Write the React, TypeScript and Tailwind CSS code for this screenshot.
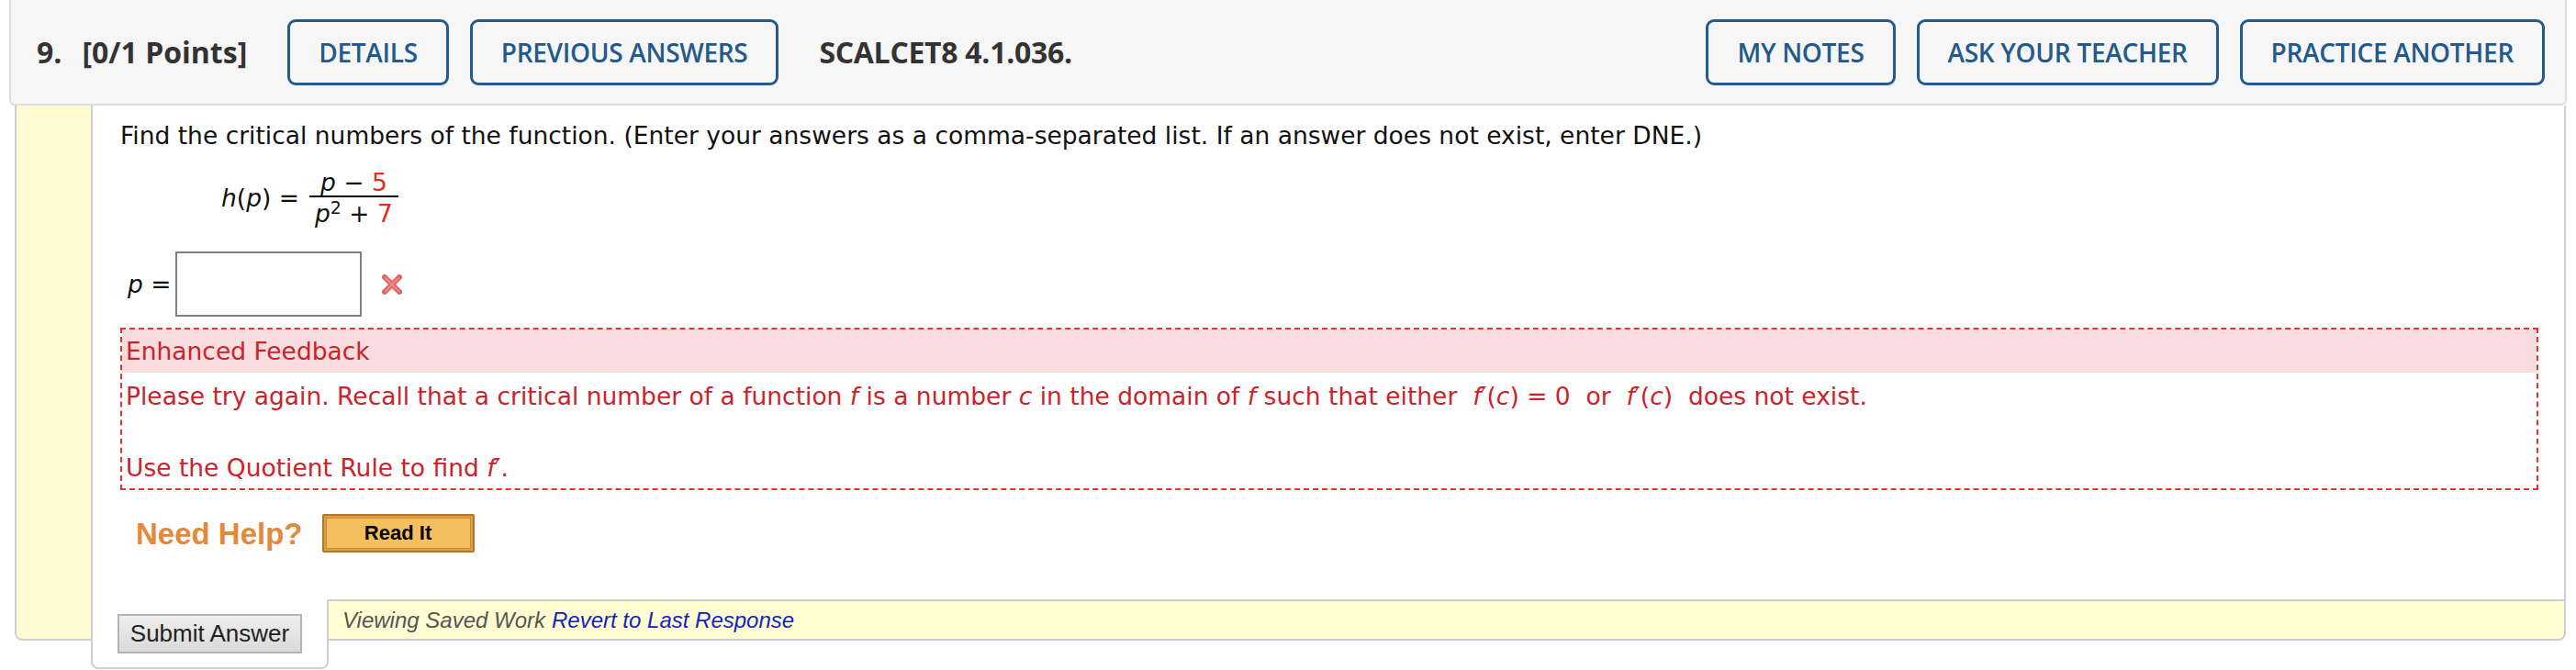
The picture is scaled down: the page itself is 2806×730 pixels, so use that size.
import React from "react";

const headerFont = { fontFamily: '"Open Sans", "Liberation Sans", sans-serif' };

function HeaderButton({ label }: { label: string }) {
  return (
    <button
      type="button"
      className="h-[72px] rounded-[9px] border-[3px] border-[#245b8c] bg-transparent px-[31px] text-[28px] font-semibold tracking-[-0.3px] text-[#235a8b]"
    >
      {label}
    </button>
  );
}

function Fraction() {
  return (
    <span className="inline-flex flex-col items-stretch">
      <span className="h-[28px] px-[6px] text-center leading-[28px]">
        <i>p</i> − <span className="text-[#ea2a20]">5</span>
      </span>
      <span className="h-[2px] bg-black" />
      <span className="h-[32px] px-[6px] pt-[4px] text-center leading-[28px]">
        <i>p</i>
        <sup className="text-[19px] leading-none">2</sup> + <span className="text-[#ea2a20]">7</span>
      </span>
    </span>
  );
}

function WrongMark() {
  return (
    <svg width="26" height="26" viewBox="0 0 26 26" className="ml-[20px]">
      <g stroke="#e15b5b" strokeWidth="6" strokeLinecap="round" opacity="0.95">
        <line x1="5" y1="5" x2="21" y2="21" />
        <line x1="21" y1="5" x2="5" y2="21" />
      </g>
      <g stroke="#f08a8a" strokeWidth="2" strokeLinecap="round">
        <line x1="6" y1="6" x2="20" y2="20" />
        <line x1="20" y1="6" x2="6" y2="20" />
      </g>
    </svg>
  );
}

export default function App() {
  return (
    <div className="h-[730px] w-[2806px] overflow-hidden bg-white">
      {/* question header */}
      <header
        className="mx-[10px] flex h-[115px] items-center rounded-b-[6px] border-2 border-t-0 border-[#dddddd] bg-[#f6f6f6] pl-[28px] pr-[22px]"
        style={headerFont}
      >
        <span className="text-[32px] font-bold text-[#333333]">9.</span>
        <span className="ml-[22px] text-[32px] font-bold text-[#333333]">[0/1 Points]</span>
        <div className="ml-[44px] flex gap-[23px]">
          <HeaderButton label="DETAILS" />
          <HeaderButton label="PREVIOUS ANSWERS" />
        </div>
        <span className="ml-[44px] text-[32px] font-bold tracking-[-0.3px] text-[#333333]">
          SCALCET8 4.1.036.
        </span>
        <div className="ml-auto flex gap-[23px]">
          <HeaderButton label="MY NOTES" />
          <HeaderButton label="ASK YOUR TEACHER" />
          <HeaderButton label="PRACTICE ANOTHER" />
        </div>
      </header>

      <div className="ml-[16px] mr-[11px] flex">
        <div className="w-[83px] shrink-0 rounded-bl-[8px] border-b-2 border-l-2 border-[#cfcfcf] bg-[#fffcd3]" />

        <div className="mb-[-31px] flex flex-1 flex-col">
          <div
            className="border-x-2 border-[#cfcfcf] bg-white pb-[51px] pl-[30px] pr-[28px] pt-[15px] text-[26.5px] text-[#111111]"
            style={{ fontFamily: '"DejaVu Sans", Verdana, sans-serif' }}
          >
            <p className="leading-[36px]">
              Find the critical numbers of the function. (Enter your answers as a comma-separated list. If an answer
              does not exist, enter DNE.)
            </p>

            <div className="ml-[110px] mt-[19px] flex items-center gap-[11px]">
              <span>
                <i>h</i>(<i>p</i>) =
              </span>
              <Fraction />
            </div>

            <div className="ml-[8px] mt-[27px] flex items-center">
              <span>
                <i>p</i> =
              </span>
              <input
                type="text"
                className="ml-[5px] h-[71px] w-[203px] border-2 border-[#808080] bg-white outline-none"
              />
              <WrongMark />
            </div>

            <div className="mt-[12px] border-2 border-dashed border-[#e8332d] text-[#cc2229]">
              <div className="bg-[#f9dcdd] pl-[4px] leading-[47px]">Enhanced Feedback</div>
              <div className="pb-[3px] pl-[4px] pt-[6px] leading-[39px]">
                <p>
                  Please try again. Recall that a critical number of a function <i>f</i> is a number <i>c</i> in the
                  domain of <i>f</i> such that either&nbsp; <i>f</i>′(<i>c</i>) = 0&nbsp; or&nbsp; <i>f</i>′(<i>c</i>)
                  &nbsp;does not exist.
                </p>
                <p>&nbsp;</p>
                <p>
                  Use the Quotient Rule to find <i>f</i>′.
                </p>
              </div>
            </div>

            <div
              className="ml-[17px] mt-[26px] flex items-center gap-[21px]"
              style={{ fontFamily: '"Liberation Sans", Arial, sans-serif' }}
            >
              <span className="text-[33px] font-bold leading-none text-[#e4893a]">Need Help?</span>
              <button
                type="button"
                className="h-[42px] w-[166px] rounded-[2px] border-2 border-[#b0772f] bg-[#f3bf5f] text-[22px] font-bold leading-none text-black shadow-[inset_0_0_0_2px_#e59d3c,inset_0_0_0_3px_#c98a3a]"
              >
                Read It
              </button>
            </div>
          </div>

          <div className="flex" style={{ fontFamily: '"Liberation Sans", Arial, sans-serif' }}>
            <div className="w-[259px] shrink-0 rounded-b-[8px] border-x-2 border-b-2 border-[#cfcfcf] bg-white pb-[15px] pl-[27px] pt-[16px]">
              <button
                type="button"
                className="h-[43px] w-[201px] border-2 border-[#b4b4b4] bg-gradient-to-b from-[#efefef] to-[#d9d9d9] text-[26px] text-[#222222]"
              >
                Submit Answer
              </button>
            </div>
            <div className="flex h-[45px] flex-1 items-center self-start rounded-br-[8px] border-y-2 border-r-2 border-[#cccccc] bg-[#fffdd1] pl-[15px] text-[24px] italic">
              <span className="text-[#555555]">Viewing Saved Work</span>
              <span className="ml-[7px] text-[#1224c4]">Revert to Last Response</span>
            </div>
          </div>
        </div>
      </div>
    </div>
  );
}
